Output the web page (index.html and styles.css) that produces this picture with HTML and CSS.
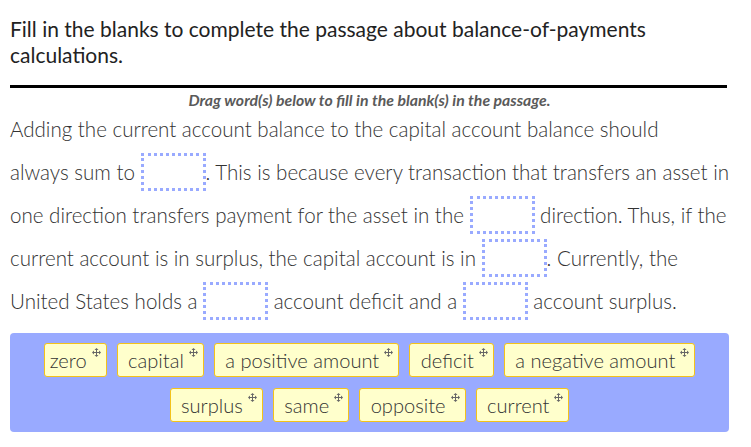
FILE: index.html
```html
<!DOCTYPE html>
<html lang="en">
<head>
<meta charset="utf-8">
<title>Balance of payments</title>
<link rel="stylesheet" href="styles.css">
</head>
<body>
<main class="page">
  <h1 class="prompt">Fill in the blanks to complete the passage about balance-of-payments calculations.</h1>
  <hr class="rule">
  <p class="instruction">Drag word(s) below to fill in the blank(s) in the passage.</p>
  <p class="passage">Adding the current account balance to the capital account balance should<br>always sum to <span class="blank"></span>. This is because every transaction that transfers an asset in<br>one direction transfers payment for the asset in the <span class="blank"></span> direction. Thus, if the<br>current account is in surplus, the capital account is in <span class="blank"></span>. Currently, the<br>United States holds a <span class="blank"></span> account deficit and a <span class="blank"></span> account surplus.</p>
  <div class="bank">
    <span class="chip"><span class="chip-text">zero</span><svg class="move" viewBox="0 0 9 9"><use href="#mv"/></svg></span>
    <span class="chip"><span class="chip-text"> capital</span><svg class="move" viewBox="0 0 9 9"><use href="#mv"/></svg></span>
    <span class="chip"><span class="chip-text"> a positive amount</span><svg class="move" viewBox="0 0 9 9"><use href="#mv"/></svg></span>
    <span class="chip"><span class="chip-text"> deficit</span><svg class="move" viewBox="0 0 9 9"><use href="#mv"/></svg></span>
    <span class="chip"><span class="chip-text"> a negative amount</span><svg class="move" viewBox="0 0 9 9"><use href="#mv"/></svg></span>
    <span class="chip"><span class="chip-text"> surplus</span><svg class="move" viewBox="0 0 9 9"><use href="#mv"/></svg></span>
    <span class="chip"><span class="chip-text"> same</span><svg class="move" viewBox="0 0 9 9"><use href="#mv"/></svg></span>
    <span class="chip"><span class="chip-text"> opposite</span><svg class="move" viewBox="0 0 9 9"><use href="#mv"/></svg></span>
    <span class="chip"><span class="chip-text"> current</span><svg class="move" viewBox="0 0 9 9"><use href="#mv"/></svg></span>
  </div>
</main>
<svg class="defs" width="0" height="0" aria-hidden="true">
  <defs>
    <g id="mv">
      <path d="M4.5 1.5V7.5M1.5 4.5H7.5" stroke="#666" stroke-width="1" fill="none"/>
      <path d="M4.5 0L2.5 2H6.5ZM4.5 9L2.5 7H6.5ZM0 4.5L2 2.5V6.5ZM9 4.5L7 2.5V6.5Z" fill="#666"/>
    </g>
  </defs>
</svg>
</body>
</html>
```
FILE: styles.css
```css
html, body {
  margin: 0;
  padding: 0;
  background: #fff;
}
body {
  font-family: "Lato", "Liberation Sans", sans-serif;
  color: #333;
}
.page {
  width: 719px;
  padding: 16px 0 0 10px;
}
.prompt {
  margin: 0;
  font-size: 21px;
  font-weight: 400;
  line-height: 26px;
  color: #222;
}
.rule {
  margin: 17px 2px 0 0;
  border: 0;
  height: 3px;
  background: #000;
}
.instruction {
  margin: 4px 0 0;
  text-align: center;
  font-size: 15.8px;
  font-weight: 700;
  font-style: italic;
  line-height: 16px;
  color: #5a5a5a;
}
.passage {
  margin: 0 -30px 0 0;
  font-size: 20.55px;
  font-weight: 300;
  line-height: 43px;
  color: #333;
}
.blank {
  display: inline-block;
  box-sizing: border-box;
  width: 65px;
  height: 38px;
  border: 3px dotted #99aaff;
  vertical-align: -11px;
}
.bank {
  margin-top: 10px;
  padding: 10px 8px;
  background: #99aaff;
  border-radius: 4px;
  display: flex;
  flex-wrap: wrap;
  justify-content: center;
  gap: 11px 10px;
}
.chip {
  display: inline-flex;
  align-items: flex-start;
  gap: 5px;
  height: 34px;
  box-sizing: border-box;
  padding: 0 5px;
  background: #ffffcc;
  border: 1px solid #f3c21a;
  border-radius: 3px;
}
.chip-text {
  white-space: pre;
  font-size: 20.1px;
  font-weight: 300;
  line-height: 32px;
  color: #333;
}
.move {
  width: 9px;
  height: 9px;
  margin-top: 4px;
}
.defs {
  position: absolute;
}
```
